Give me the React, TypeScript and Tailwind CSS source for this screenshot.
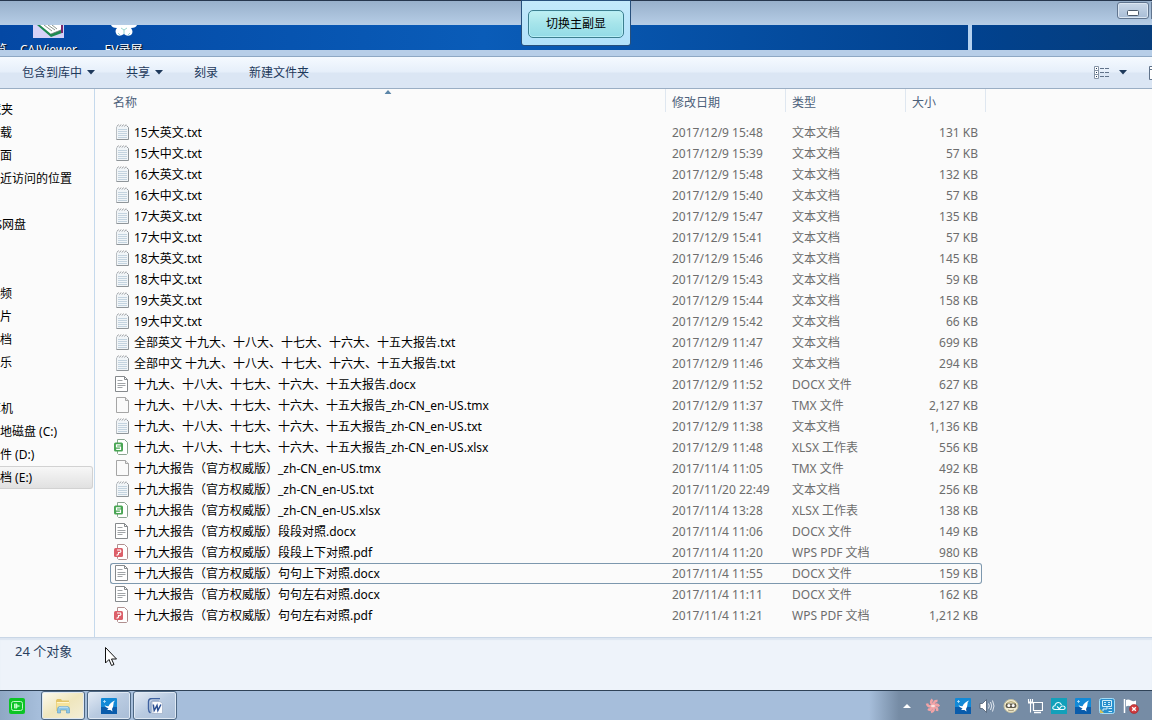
import React from 'react';

type FileKind = 'txt' | 'docx' | 'tmx' | 'xlsx' | 'pdf';

interface FileRow {
  name: string;
  date: string;
  size: string;
  kind: FileKind;
}

const TYPE_LABELS: Record<FileKind, string> = {
  txt: '文本文档',
  docx: 'DOCX 文件',
  tmx: 'TMX 文件',
  xlsx: 'XLSX 工作表',
  pdf: 'WPS PDF 文档',
};

const FILES: FileRow[] = [
  { name: '15大英文.txt', date: '2017/12/9 15:48', size: '131 KB', kind: 'txt' },
  { name: '15大中文.txt', date: '2017/12/9 15:39', size: '57 KB', kind: 'txt' },
  { name: '16大英文.txt', date: '2017/12/9 15:48', size: '132 KB', kind: 'txt' },
  { name: '16大中文.txt', date: '2017/12/9 15:40', size: '57 KB', kind: 'txt' },
  { name: '17大英文.txt', date: '2017/12/9 15:47', size: '135 KB', kind: 'txt' },
  { name: '17大中文.txt', date: '2017/12/9 15:41', size: '57 KB', kind: 'txt' },
  { name: '18大英文.txt', date: '2017/12/9 15:46', size: '145 KB', kind: 'txt' },
  { name: '18大中文.txt', date: '2017/12/9 15:43', size: '59 KB', kind: 'txt' },
  { name: '19大英文.txt', date: '2017/12/9 15:44', size: '158 KB', kind: 'txt' },
  { name: '19大中文.txt', date: '2017/12/9 15:42', size: '66 KB', kind: 'txt' },
  { name: '全部英文 十九大、十八大、十七大、十六大、十五大报告.txt', date: '2017/12/9 11:47', size: '699 KB', kind: 'txt' },
  { name: '全部中文 十九大、十八大、十七大、十六大、十五大报告.txt', date: '2017/12/9 11:46', size: '294 KB', kind: 'txt' },
  { name: '十九大、十八大、十七大、十六大、十五大报告.docx', date: '2017/12/9 11:52', size: '627 KB', kind: 'docx' },
  { name: '十九大、十八大、十七大、十六大、十五大报告_zh-CN_en-US.tmx', date: '2017/12/9 11:37', size: '2,127 KB', kind: 'tmx' },
  { name: '十九大、十八大、十七大、十六大、十五大报告_zh-CN_en-US.txt', date: '2017/12/9 11:38', size: '1,136 KB', kind: 'txt' },
  { name: '十九大、十八大、十七大、十六大、十五大报告_zh-CN_en-US.xlsx', date: '2017/12/9 11:48', size: '556 KB', kind: 'xlsx' },
  { name: '十九大报告（官方权威版）_zh-CN_en-US.tmx', date: '2017/11/4 11:05', size: '492 KB', kind: 'tmx' },
  { name: '十九大报告（官方权威版）_zh-CN_en-US.txt', date: '2017/11/20 22:49', size: '256 KB', kind: 'txt' },
  { name: '十九大报告（官方权威版）_zh-CN_en-US.xlsx', date: '2017/11/4 13:28', size: '138 KB', kind: 'xlsx' },
  { name: '十九大报告（官方权威版）段段对照.docx', date: '2017/11/4 11:06', size: '149 KB', kind: 'docx' },
  { name: '十九大报告（官方权威版）段段上下对照.pdf', date: '2017/11/4 11:20', size: '980 KB', kind: 'pdf' },
  { name: '十九大报告（官方权威版）句句上下对照.docx', date: '2017/11/4 11:55', size: '159 KB', kind: 'docx' },
  { name: '十九大报告（官方权威版）句句左右对照.docx', date: '2017/11/4 11:11', size: '162 KB', kind: 'docx' },
  { name: '十九大报告（官方权威版）句句左右对照.pdf', date: '2017/11/4 11:21', size: '1,212 KB', kind: 'pdf' },
];

const FOCUSED = '十九大报告（官方权威版）句句上下对照.docx';

interface NavItem {
  label: string;
  root?: boolean;
  selected?: boolean;
}

// null is an empty row between groups
const NAV: (NavItem | null)[] = [
  { label: '收藏夹', root: true },
  { label: '下载' },
  { label: '桌面' },
  { label: '最近访问的位置' },
  null,
  { label: 'WPS网盘', root: true },
  null,
  null,
  { label: '视频' },
  { label: '图片' },
  { label: '文档' },
  { label: '音乐' },
  null,
  { label: '计算机', root: true },
  { label: '本地磁盘 (C:)' },
  { label: '软件 (D:)' },
  { label: '文档 (E:)', selected: true },
];

const FILE_ICONS: Record<FileKind, React.ReactNode> = {
  txt: (
    <>
      <path d="M1.500 1.500h12v14h-12z" fill="#f1f5f8" />
      <path d="M3 5.500h9M3 7.500h9M3 9.500h9M3 11.500h9M3 13.500h9" stroke="#c3d3df" />
      <path d="M1.500 3v12.500" stroke="#b9bec2" />
      <path d="M2 2.500l1.500-2M4.500 2.500l1.500-2M7 2.500l1.500-2M9.500 2.500l1.500-2M11.500 1.500l2 2" stroke="#8c8f92" strokeWidth=".9" />
      <path d="M13.500 3.500v12h-12" fill="none" stroke="#8f9599" />
    </>
  ),
  docx: (
    <>
      <path d="M.5.5h9l3 3v12H.5z" fill="#fff" stroke="#85898c" />
      <path d="M9.500.500v3h3" fill="none" stroke="#85898c" />
      <path d="M2.500 4.500h5M2.500 7.500h8M2.500 9.500h8M2.500 11.500h5" stroke="#a0a4a7" />
    </>
  ),
  tmx: (
    <>
      <path d="M1.500.500h9l3 3v12h-12z" fill="#fafafa" stroke="#a5a5a5" />
      <path d="M10.500.500v3h3" fill="#e8e8e8" stroke="#a5a5a5" />
    </>
  ),
  xlsx: (
    <>
      <path d="M2.500.5h7l3 3v11l-1 1h-8l-1-1z" fill="#fff" stroke="#8ba491" />
      <rect x="-1" y="3.500" width="9" height="9" rx="1.500" fill="#48a553" />
      <path d="M5.700 5.800H1.500V8h4v2.300H1.200" fill="none" stroke="#fff" strokeWidth="1.200" />
    </>
  ),
  pdf: (
    <>
      <path d="M2.500.5h7l3 3v11l-1 1h-8l-1-1z" fill="#fff" stroke="#b09090" />
      <rect x="-1" y="4" width="9" height="9" rx="1.500" fill="#dc5f69" />
      <path d="M2 6h3.500q1 1.500-.5 2.500H3.500V10q-.5 1.200-2 1" fill="none" stroke="#fff" strokeWidth="1.200" />
    </>
  ),
};

const FileIcon: React.FC<{ kind: FileKind }> = ({ kind }) => (
  <svg width="17" height="17" viewBox="-1 0 17 17" className="shrink-0">
    {FILE_ICONS[kind]}
  </svg>
);

const Caret: React.FC = () => (
  <svg width="8" height="5" viewBox="0 0 8 5">
    <path d="M0 0h8L4 4.500z" fill="#1e395b" />
  </svg>
);

const BirdIcon: React.FC = () => (
  <svg width="16" height="16" viewBox="0 0 16 16">
    <rect width="16" height="16" rx="1" fill="#1289d6" />
    <path d="M0 9h16v7H0z" fill="#0a5cab" />
    <path d="M3.500 7q2 1.500 4 1.200Q9.500 4 14 2.500q-2 2-1.500 3.500-.2 3-1.500 5l.5 2.500-2-1.500H6l1.500-1.500Q4.500 10 3.500 7z" fill="#fff" />
    <path d="M3.500 2v3M2 3.500h3" stroke="#bfe4fa" strokeWidth=".8" />
  </svg>
);

const DesktopStrip: React.FC = () => (
  <div className="flex h-[25px] shrink-0 overflow-hidden bg-[#b4d1f0]">
    <div className="flex min-w-0 flex-1 overflow-hidden bg-linear-to-r from-[#0448a4] via-[#0a5cb8] to-[#02428f] text-xs leading-4 text-white [text-shadow:1px_1px_1px_#000]">
      <div className="flex w-[11px] shrink-0 flex-col items-end pr-1 pt-[17px]">
        <span>览</span>
      </div>
      <div className="flex w-[75px] shrink-0 flex-col items-center gap-[3px]">
        <svg width="31" height="14" viewBox="0 0 31 14" className="shrink-0">
          <path d="M0 0h31v13H0z" fill="#d5d2f7" />
          <path d="M4 0l14 12 11-4V3L18 8 8 0z" fill="#1d8a50" />
          <path d="M7 0l11 9 10-4V0z" fill="#fff" />
          <path d="M11 0l8 6M15 0l7 5M19 0l5 4M18 9l10-4" stroke="#6c7a70" strokeWidth=".8" fill="none" />
          <path d="M28 0h2v8h-2z" fill="#7b286b" />
        </svg>
        <span>CAJViewer</span>
      </div>
      <div className="flex w-[75px] shrink-0 flex-col items-center gap-[3px]">
        <svg width="28" height="14" viewBox="0 0 28 14" className="shrink-0">
          <path d="M1 0h26q-1 3-6 3 3 4 0 7-4 2-7-1-4 3-7 1-3-4 0-7-5 0-6-3z" fill="#fff" />
          <path d="M11 3l3 2 3-2M14 5v4M8 8l2 2M20 8l-2 2" fill="none" stroke="#98d5d0" />
        </svg>
        <span>EV录屏</span>
      </div>
    </div>
    <div className="ml-1 w-[180px] shrink-0 bg-linear-to-r from-[#01428f] to-[#063d7c]" />
  </div>
);

const Toolbar: React.FC = () => (
  <div className="flex h-[33px] shrink-0 items-center justify-between overflow-hidden border-y border-t-[#8ea8c4] border-b-[#9aaec4] bg-linear-to-b from-[#f5faff] from-0% via-[#e6effa] via-48% to-[#dbe6f4] to-52% pl-[22px] text-[#1e395b]">
    <div className="flex items-center gap-[31px]">
      <button className="flex items-center gap-[5px]">包含到库中<Caret /></button>
      <button className="flex items-center gap-[5px]">共享<Caret /></button>
      <button>刻录</button>
      <button>新建文件夹</button>
    </div>
    <div className="flex items-center">
      <button aria-label="更改您的视图" className="mr-[10px]">
        <svg width="15" height="13" viewBox="0 0 15 13">
          <path d="M.5.500h4v12h-4zM.500 4.500h4M.500 8.500h4" fill="#fff" stroke="#8795a6" />
          <path d="M2 2.500h1M2 6.500h1M2 10.500h1" stroke="#1e395b" />
          <path d="M6 2.500h4M11 2.500h4M6 6.500h4M11 6.500h4M6 10.500h4M11 10.500h4" stroke="#61738a" />
        </svg>
      </button>
      <button aria-label="更多选项" className="mr-[22px]"><Caret /></button>
      <button aria-label="预览窗格">
        <svg width="3" height="14" viewBox="0 0 3 14">
          <path d="M4 .5H.5v13H4M.5 3.500H4" fill="#fff" stroke="#61738a" />
        </svg>
      </button>
    </div>
  </div>
);

const Sidebar: React.FC = () => (
  <nav className="w-[95px] shrink-0 overflow-hidden border-r border-[#c5d9ec] pt-[9px]">
    {NAV.map((item, i) => {
      if (!item) return <div key={i} className="h-[23px]" />;
      if (item.selected) {
        return (
          <div key={i} className="mr-px flex h-[23px] items-center rounded-r-[3px] border border-l-0 border-[#d2d2d2] bg-linear-to-b from-[#f7f7f7] to-[#e1e1e1]">
            <a href="#" className="-ml-3 whitespace-nowrap">{item.label}</a>
          </div>
        );
      }
      return (
        <div key={i} className="flex h-[23px] items-center">
          <a href="#" className={`whitespace-nowrap ${item.root ? '-ml-[23px]' : '-ml-3'}`}>{item.label}</a>
        </div>
      );
    })}
  </nav>
);

const HEAD_CELL = 'border-r border-[#dfe7f0] p-0 pl-1.5 pt-1 text-left font-normal';

const FileTable: React.FC = () => (
  <table className="ml-[15px] table-fixed border-separate border-spacing-0">
    <colgroup>
      <col className="w-[556px]" />
      <col className="w-[120px]" />
      <col className="w-[120px]" />
      <col className="w-[76px]" />
      <col className="w-[4px]" />
    </colgroup>
    <thead className="text-[#4c607a]">
      <tr className="h-[23px]">
        <th className="relative border-r border-[#dfe7f0] p-0 pl-[3px] pt-1 text-left font-normal">
          名称
          <svg width="7" height="4" viewBox="0 0 7 4" className="absolute left-1/2 top-px -translate-x-1/2">
            <path d="M0 4l3.500-4L7 4z" fill="#5c86a8" />
          </svg>
        </th>
        <th className={HEAD_CELL}>修改日期</th>
        <th className={HEAD_CELL}>类型</th>
        <th className={HEAD_CELL} colSpan={2}>大小</th>
      </tr>
      <tr className="h-[10px]">
        <td colSpan={5} className="p-0" />
      </tr>
    </thead>
    <tbody className="text-[#6d6d6d]">
      {FILES.map((file) => {
        const line = file.name === FOCUSED ? 'border-[#7d98ae]' : 'border-transparent';
        return (
          <tr key={file.name} className="h-[21px]">
            <td className={`rounded-l-[3px] border-y border-l p-0 pl-[3px] ${line}`}>
              <div className="flex h-[19px] items-center gap-[3px] whitespace-nowrap text-black">
                <FileIcon kind={file.kind} />
                {file.name}
              </div>
            </td>
            <td className={`whitespace-nowrap border-y p-0 pl-1.5 ${line}`}>{file.date}</td>
            <td className={`whitespace-nowrap border-y p-0 pl-1.5 ${line}`}>{TYPE_LABELS[file.kind]}</td>
            <td className={`whitespace-nowrap rounded-r-[3px] border-y border-r p-0 pr-[3px] text-right ${line}`}>{file.size}</td>
            <td className="p-0" />
          </tr>
        );
      })}
    </tbody>
  </table>
);

const StatusBar: React.FC = () => (
  <div className="relative h-[53px] shrink-0 border-t border-[#c9d6e6] bg-[#eef3fa] px-[15px] pt-1 text-[13px] leading-[18px] text-[#2a3f5f] shadow-[inset_0_2px_1px_#dde6f1]">
    24 个对象
    <svg width="13" height="20" viewBox="0 0 13 20" className="absolute left-[105px] top-[9px]">
      <path d="M.5.500v15.500l3.500-3.500 2.500 6 2.500-1-2.500-5.500h5z" fill="#fff" stroke="#111" />
    </svg>
  </div>
);

const TASK_BUTTON = 'flex h-[29px] w-[44px] items-center justify-center rounded-[3px] border border-[#4d6783] shadow-[inset_0_0_0_1px_#dfe9f4]';

const Taskbar: React.FC = () => (
  <div className="flex h-[30px] shrink-0 items-stretch justify-between border-t border-[#2f4257] bg-[#a6bedb]">
    <div className="flex items-center gap-0.5">
      <button aria-label="录屏" className="flex h-[29px] w-[39px] items-center bg-linear-to-r from-[#8fa8c4] to-[#a6bedb] pl-[9px]">
        <svg width="16" height="16" viewBox="0 0 16 16">
          <rect width="16" height="16" rx="2" fill="#0cc425" />
          <rect x="2.500" y="3.500" width="11" height="9" rx="2" fill="none" stroke="#bdf7c4" />
          <path d="M5.500 5v6l6-3z" fill="#8ef09b" />
          <path d="M5.500 6v4M7.500 5.500v5" stroke="#d8ffdc" strokeWidth=".8" />
        </svg>
      </button>
      <button aria-label="资源管理器" className={`${TASK_BUTTON} bg-linear-to-br from-[#fdfbf0] via-[#efe6bd] to-[#f3eed8]`}>
        <svg width="18" height="16" viewBox="0 0 18 16">
          <path d="M2 2.500L3 1h4l1 1.500h7V13H2z" fill="#e3c568" />
          <path d="M2.500 4h13.500v9H2.500z" fill="#f6e39b" />
          <path d="M3 4.500h12" stroke="#fff6cc" />
          <path d="M3.500 15v-4q0-2.500 2.500-2.500h7q2.500 0 2.500 2.500v4h-3v-3h-6v3z" fill="#8cc6e6" stroke="#5a9cc8" strokeWidth=".6" />
          <path d="M5 10q1-.8 2-.8h5q1.500 0 2 .8" fill="none" stroke="#d6eefb" strokeWidth=".8" />
        </svg>
      </button>
      <button aria-label="迅雷" className={`${TASK_BUTTON} bg-linear-to-br from-[#e3ebf5] via-[#b9cbe1] to-[#a9bdd6]`}>
        <BirdIcon />
      </button>
      <button aria-label="Word" className={`${TASK_BUTTON} bg-linear-to-br from-[#e3ebf5] via-[#b9cbe1] to-[#a9bdd6]`}>
        <svg width="16" height="16" viewBox="0 0 16 16">
          <path d="M13 .5H5Q1.500.5 1.500 4v7q0 2.500 2 4" fill="none" stroke="#3f62a0" strokeWidth="1.400" />
          <path d="M12 2.800H6Q3.800 2.800 3.800 5v9" fill="none" stroke="#8ba3c9" />
          <path d="M5 3.500h8l2.500 2v10H5z" fill="#fbfcfe" stroke="#a3b2c9" strokeWidth=".8" />
          <path d="M6.300 6.500l.9 6 2.800-5 .9 5 3-6" fill="none" stroke="#2b4f91" strokeWidth="1.500" />
        </svg>
      </button>
    </div>
    <div className="flex items-center gap-2 bg-linear-to-r from-[#a6bedb] to-[#768ca5] to-[30px] pl-[34px] pr-[13px]">
      <svg width="8" height="4" viewBox="0 0 8 4" className="mr-1.5">
        <path d="M0 4l4-4 4 4z" fill="#fff" />
      </svg>
      <svg width="16" height="16" viewBox="0 0 16 16" className="mr-1.5">
        <g fill="none" stroke="#f2a3a6" strokeWidth="2.600">
          <path d="M8 7Q4.500 4.500 7.500 1.500" />
          <path d="M9 7q-.5-4.500 3.500-4" />
          <path d="M9 8q3-3 5 .5" />
          <path d="M9 9q4 0 3 4" />
          <path d="M8 9q2 4-2 5" />
          <path d="M7 9q-1 4-4 2" />
          <path d="M7 8Q3 9.500 2 5.500" />
        </g>
        <ellipse cx="8" cy="8" rx="2" ry="1.300" fill="#fbe2e0" />
      </svg>
      <BirdIcon />
      <svg width="16" height="16" viewBox="0 0 16 16">
        <path d="M1 5.500h2.500L7.500 1.500v13l-4-4H1z" fill="#fff" stroke="#4a5b6e" strokeWidth=".8" />
        <path d="M9.500 5.500q1.500 2.500 0 5M11.500 4q2.500 4 0 8M13.500 2.500q3 5.500 0 11" fill="none" stroke="#eef3f8" strokeWidth=".9" />
      </svg>
      <svg width="16" height="16" viewBox="0 0 16 16">
        <ellipse cx="8" cy="8" rx="7" ry="6.500" fill="#f1ecd4" stroke="#c9c39f" />
        <path d="M3 6q5-4.500 10 0" fill="none" stroke="#a89a5c" />
        <rect x="2.500" y="5.500" width="11" height="4.500" rx="2.200" fill="#5f5a4c" />
        <circle cx="5.800" cy="7.500" r="1.500" fill="#fff" />
        <circle cx="10.200" cy="7.500" r="1.500" fill="#fff" />
        <path d="M5 12q3 1.500 6 0" fill="none" stroke="#a09675" />
      </svg>
      <svg width="16" height="16" viewBox="0 0 16 16">
        <path d="M6.500 4.500h9v8h-9z" fill="#70849b" stroke="#fff" strokeWidth="1.200" />
        <path d="M7 14.500h7" stroke="#fff" strokeWidth="1.500" />
        <path d="M1 3.500h5v2H1z" fill="#fff" />
        <path d="M1.500 1v3M3.500 1v3M5.500 1v3M3.500 5v9.500" fill="none" stroke="#fff" strokeWidth="1.100" />
      </svg>
      <svg width="16" height="16" viewBox="0 0 16 16">
        <rect width="16" height="16" fill="#12a0ba" />
        <path d="M4 11.500q-2.500-.2-2.200-2.200.3-1.600 2.200-1.600Q4.500 4.500 7.500 4.500q2.200 0 3 2.500M4 11.500h8.500q1.800-.3 1.600-1.800-.3-1.700-2.300-1.700-1.500 0-2.300 1.200L8 11.500M6 8.500l3 3" fill="none" stroke="#f0fcff" strokeWidth="1.100" />
      </svg>
      <BirdIcon />
      <svg width="16" height="16" viewBox="0 0 16 16">
        <rect x=".5" y=".5" width="15" height="15" rx="2" fill="#2a90cd" stroke="#a5dcf6" />
        <path d="M3.500 2.500h9v6h-9zM5 4.500h2M9 4.500h2M5 6.500h2M9 6.500h2M8 9v2H4v2M9.500 10.500H13M9.500 13.500H13" fill="none" stroke="#d3effb" />
        <path d="M1 11l4 4H1z" fill="#d7c258" />
      </svg>
      <svg width="16" height="16" viewBox="0 0 16 16">
        <path d="M1.500 1v14" stroke="#fff" strokeWidth="1.500" />
        <path d="M3 2q2.500-1 5 .5t5 0V9q-2.500 1-5-.5T3 8.500z" fill="#fff" />
        <circle cx="11" cy="11" r="4.500" fill="#cf3a3e" stroke="#a02a2d" strokeWidth=".6" />
        <path d="M9.200 9.200l3.600 3.600M12.800 9.200l-3.600 3.600" stroke="#fff" strokeWidth="1.400" />
      </svg>
    </div>
  </div>
);

export default function App() {
  return (
    <div className="relative flex min-h-screen flex-col overflow-hidden bg-[#fbfbfb] font-['Noto_Sans','Noto_Sans_CJK_SC',sans-serif] text-xs leading-4 text-black">
      <div className="flex h-[25px] shrink-0 justify-end gap-0.5 overflow-hidden border-t border-[#26364d] bg-linear-to-b from-[#98b0cb] to-[#b6cde6] pt-px">
        <button aria-label="最小化" className="flex h-[17px] w-8 items-center justify-center rounded-[3px] border border-[#61758f] bg-linear-to-b from-[#c9d7e8] to-[#a8bdd6] pt-1 shadow-[inset_0_0_0_1px_#dbe6f2]">
          <svg width="12" height="6" viewBox="0 0 12 6">
            <rect x=".5" y=".5" width="11" height="5" rx="1" fill="#fff" stroke="#4d5a6b" />
          </svg>
        </button>
        <div className="h-[17px] w-px bg-[#61758f]" />
      </div>
      <DesktopStrip />
      <div className="h-1.5 shrink-0 bg-[#b7cee8]" />
      <Toolbar />
      <div className="flex flex-1">
        <Sidebar />
        <main className="min-w-0 flex-1">
          <FileTable />
        </main>
      </div>
      <StatusBar />
      <Taskbar />

      {/* display switcher floating over the title bar */}
      <div className="absolute left-1/2 top-0 -translate-x-1/2 rounded-b-[3px] border border-[#28507c] bg-linear-to-b from-[#c3e9fb] to-[#b2e2fa] px-1.5 pb-[7px] pt-[9px]">
        <button className="h-7 w-24 rounded-[5px] border border-[#3c7f8f] bg-linear-to-b from-[#bff0f2] from-0% via-[#a5e4ea] via-50% to-[#93dbe6] to-100% shadow-[inset_0_0_0_1px_#b5eef5]">
          切换主副显
        </button>
      </div>
    </div>
  );
}
